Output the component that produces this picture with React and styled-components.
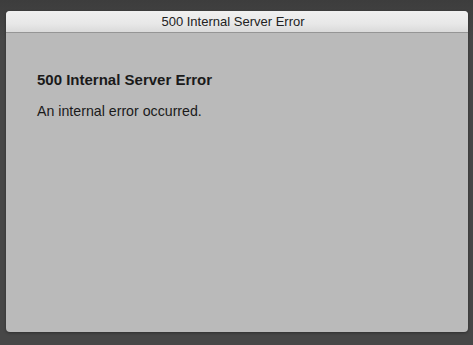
import React from 'react';
import styled, { createGlobalStyle } from 'styled-components';

const GlobalStyle = createGlobalStyle`
  html, body {
    margin: 0;
    padding: 0;
  }
  body {
    font-family: "Liberation Sans", Arial, sans-serif;
  }
`;

const Desktop = styled.div`
  width: 473px;
  height: 345px;
  box-sizing: border-box;
  padding: 11px 5px 13px 6px;
  background: linear-gradient(#3d3d3d, #474747 40px, #474747);
  display: flex;
`;

const Window = styled.div`
  flex: 1;
  display: flex;
  flex-direction: column;
  border-radius: 4px;
  overflow: hidden;
  background: #bababa;
  box-shadow: 0 1px 3px rgba(0, 0, 0, 0.35);
`;

const TitleBar = styled.div`
  height: 21px;
  flex: none;
  display: flex;
  align-items: center;
  justify-content: center;
  background: linear-gradient(#f0f0f0, #e8e8e8 60%, #dadada);
  border-bottom: 1px solid #959595;
  color: #222;
  font-size: 13px;
  padding-right: 8px;
`;

const Content = styled.div`
  padding: 38px 31px;
  color: #1a1a1a;
`;

const Heading = styled.h1`
  margin: 0 0 15px;
  font-size: 15px;
  font-weight: bold;
`;

const Message = styled.p`
  margin: 0;
  font-size: 14.2px;
`;

export default function App() {
  return (
    <>
      <GlobalStyle />
      <Desktop>
        <Window>
          <TitleBar>500 Internal Server Error</TitleBar>
          <Content>
            <Heading>500 Internal Server Error</Heading>
            <Message>An internal error occurred.</Message>
          </Content>
        </Window>
      </Desktop>
    </>
  );
}
